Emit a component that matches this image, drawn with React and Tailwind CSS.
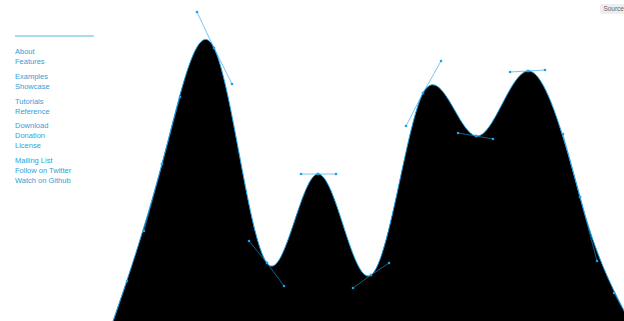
import React from "react";

const groups = [
  ["About", "Features"],
  ["Examples", "Showcase"],
  ["Tutorials", "Reference"],
  ["Download", "Donation", "License"],
  ["Mailing List", "Follow on Twitter", "Watch on Github"],
];

// anchor, handleIn, handleOut
const nodes = [
  [[110, 330], null, [127, 281]],
  [[162, 164], [144, 231], [180, 97]],
  [[214, 48], [197, 12], [232, 84]],
  [[267, 263], [249, 241], [284, 286]],
  [[318, 174], [301, 174], [336, 174]],
  [[371, 275], [353, 288], [389, 263]],
  [[423, 93], [406, 126], [441, 61]],
  [[476, 136], [458, 133], [493, 139]],
  [[528, 71], [510, 72], [545, 70]],
  [[580, 197], [563, 134], [597, 261]],
  [[640, 340], [614, 293], null],
];

const buildPath = () => {
  let d = `M ${nodes[0][0][0]} ${nodes[0][0][1]}`;
  for (let i = 1; i < nodes.length; i++) {
    const a = nodes[i - 1][2];
    const b = nodes[i][1];
    const p = nodes[i][0];
    d += ` C ${a[0]} ${a[1]}, ${b[0]} ${b[1]}, ${p[0]} ${p[1]}`;
  }
  return d;
};

const curve = buildPath();

const Drawing = () => (
  <svg width="514" height="321" viewBox="110 0 514 321" className="block">
    <path d={`${curve} L 640 400 L 100 400 Z`} fill="#000" />
    <path d={curve} fill="none" stroke="#1ea0e6" strokeWidth="1" />
    {nodes.map(([p, hin, hout], i) => (
      <g key={i}>
        {hin && (
          <line x1={hin[0]} y1={hin[1]} x2={p[0]} y2={p[1]} stroke="#1ea0e6" strokeOpacity="0.6" strokeWidth="1" />
        )}
        {hout && (
          <line x1={p[0]} y1={p[1]} x2={hout[0]} y2={hout[1]} stroke="#1ea0e6" strokeOpacity="0.6" strokeWidth="1" />
        )}
        {hin && <circle cx={hin[0]} cy={hin[1]} r="1.3" fill="#1ea0e6" />}
        {hout && <circle cx={hout[0]} cy={hout[1]} r="1.3" fill="#1ea0e6" />}
        <rect x={p[0] - 1.25} y={p[1] - 1.25} width="2.5" height="2.5" fill="#1ea0e6" />
      </g>
    ))}
  </svg>
);

export default function App() {
  return (
    <div className="relative flex h-[321px] w-[624px] overflow-hidden bg-white" style={{ fontFamily: "'Liberation Sans', Arial, sans-serif" }}>
      {/* Sidebar */}
      <div className="w-[110px] shrink-0 pl-[15px] pt-[35px]">
        <div className="h-[2px] w-[79px] bg-[#a9dcef]" />
        <div className="mt-[10px] flex flex-col gap-[4.75px]">
          {groups.map((g, i) => (
            <div key={i} className="flex flex-col">
              {g.map((label) => (
                <a key={label} className="block text-[7.5px] leading-[10px] text-[#2f9fd8]">
                  {label}
                </a>
              ))}
            </div>
          ))}
        </div>
      </div>

      {/* Canvas */}
      <div className="flex-1">
        <Drawing />
      </div>

      <button className="absolute right-0 top-[4px] h-[10px] rounded-l-[2px] bg-[#eeeeee] pl-[3px] pr-0 text-[6.5px] leading-[10px] text-[#666]">
        Source
      </button>
    </div>
  );
}
